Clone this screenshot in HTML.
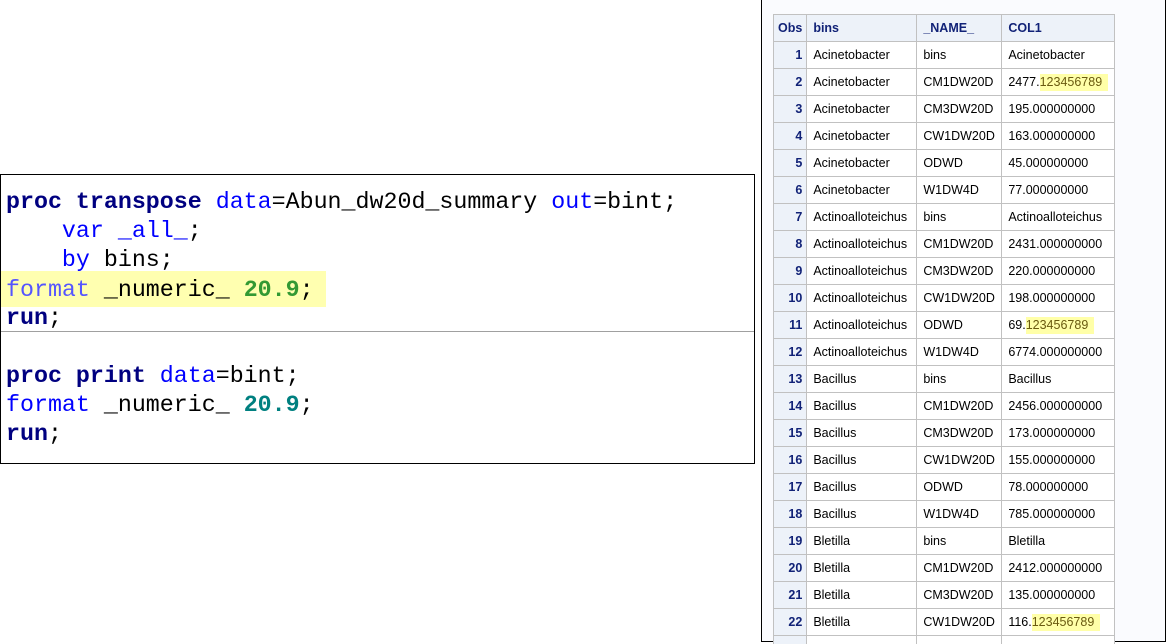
<!DOCTYPE html>
<html><head><style>
html,body{margin:0;padding:0;width:1167px;height:644px;background:#fff;overflow:hidden;position:relative}
.code{position:absolute;left:0;top:174px;width:753px;height:288px;border:1px solid #000;background:#fff}
.sep{position:absolute;left:0;top:156px;width:753px;height:1px;background:#a0a0a0}
.ln{position:absolute;left:5px;font-family:"Liberation Mono",monospace;font-size:23.3px;line-height:29px;white-space:pre;color:#000}
.k{color:#000080;font-weight:bold}
.b{color:#0000ff}
.f{color:#5555ff}
.g{color:#339933;font-weight:bold}
.t{color:#008080;font-weight:bold}
.hl{position:absolute;left:0;top:96px;width:325px;height:36px;background:#ffffb0}
.panel{position:absolute;left:761px;top:0;width:403px;height:641px;border:1px solid #000;border-top:none;background:#fafbfe}
table{position:absolute;left:11px;top:14px;border-collapse:collapse;font-family:"Liberation Sans",sans-serif;font-size:12.5px}
td,th{border:1px solid #c1c1c1;height:26px;padding:0 6px;text-align:left;white-space:nowrap;background:#fff;color:#000}
th{background:#edf2f9;color:#112277;font-weight:bold}
td.o{background:#edf2f9;color:#112277;font-weight:bold;text-align:right;padding:0 4px}
.y{background:#ffffa8;color:#6a5a10;padding:1px 6px 2px 0}
</style></head><body>
<div class="code">
<div class="hl"></div>
<div class="ln" style="top:13px"><span class="k">proc transpose</span> <span class="b">data</span>=Abun_dw20d_summary <span class="b">out</span>=bint;</div>
<div class="ln" style="top:42px">    <span class="b">var</span> <span class="b">_all_</span>;</div>
<div class="ln" style="top:71px">    <span class="b">by</span> bins;</div>
<div class="ln" style="top:101px"><span class="f">format</span> _numeric_ <span class="g">20.9</span>;</div>
<div class="ln" style="top:129px"><span class="k">run</span>;</div>
<div class="sep"></div>
<div class="ln" style="top:187px"><span class="k">proc print</span> <span class="b">data</span>=bint;</div>
<div class="ln" style="top:216px"><span class="b">format</span> _numeric_ <span class="t">20.9</span>;</div>
<div class="ln" style="top:245px"><span class="k">run</span>;</div>
</div>
<div class="panel">
<table>
<tr><th style="width:22px;padding:0 4px">Obs</th><th style="width:97px">bins</th><th style="width:72px">_NAME_</th><th style="width:94px">COL1</th></tr>
<tr><td class="o">1</td><td>Acinetobacter</td><td>bins</td><td>Acinetobacter</td></tr>
<tr><td class="o">2</td><td>Acinetobacter</td><td>CM1DW20D</td><td>2477.<span class="y">123456789</span></td></tr>
<tr><td class="o">3</td><td>Acinetobacter</td><td>CM3DW20D</td><td>195.000000000</td></tr>
<tr><td class="o">4</td><td>Acinetobacter</td><td>CW1DW20D</td><td>163.000000000</td></tr>
<tr><td class="o">5</td><td>Acinetobacter</td><td>ODWD</td><td>45.000000000</td></tr>
<tr><td class="o">6</td><td>Acinetobacter</td><td>W1DW4D</td><td>77.000000000</td></tr>
<tr><td class="o">7</td><td>Actinoalloteichus</td><td>bins</td><td>Actinoalloteichus</td></tr>
<tr><td class="o">8</td><td>Actinoalloteichus</td><td>CM1DW20D</td><td>2431.000000000</td></tr>
<tr><td class="o">9</td><td>Actinoalloteichus</td><td>CM3DW20D</td><td>220.000000000</td></tr>
<tr><td class="o">10</td><td>Actinoalloteichus</td><td>CW1DW20D</td><td>198.000000000</td></tr>
<tr><td class="o">11</td><td>Actinoalloteichus</td><td>ODWD</td><td>69.<span class="y">123456789</span></td></tr>
<tr><td class="o">12</td><td>Actinoalloteichus</td><td>W1DW4D</td><td>6774.000000000</td></tr>
<tr><td class="o">13</td><td>Bacillus</td><td>bins</td><td>Bacillus</td></tr>
<tr><td class="o">14</td><td>Bacillus</td><td>CM1DW20D</td><td>2456.000000000</td></tr>
<tr><td class="o">15</td><td>Bacillus</td><td>CM3DW20D</td><td>173.000000000</td></tr>
<tr><td class="o">16</td><td>Bacillus</td><td>CW1DW20D</td><td>155.000000000</td></tr>
<tr><td class="o">17</td><td>Bacillus</td><td>ODWD</td><td>78.000000000</td></tr>
<tr><td class="o">18</td><td>Bacillus</td><td>W1DW4D</td><td>785.000000000</td></tr>
<tr><td class="o">19</td><td>Bletilla</td><td>bins</td><td>Bletilla</td></tr>
<tr><td class="o">20</td><td>Bletilla</td><td>CM1DW20D</td><td>2412.000000000</td></tr>
<tr><td class="o">21</td><td>Bletilla</td><td>CM3DW20D</td><td>135.000000000</td></tr>
<tr><td class="o">22</td><td>Bletilla</td><td>CW1DW20D</td><td>116.<span class="y">123456789</span></td></tr>
<tr><td class="o">&nbsp;</td><td></td><td></td><td></td></tr>
</table>
</div>
</body></html>
